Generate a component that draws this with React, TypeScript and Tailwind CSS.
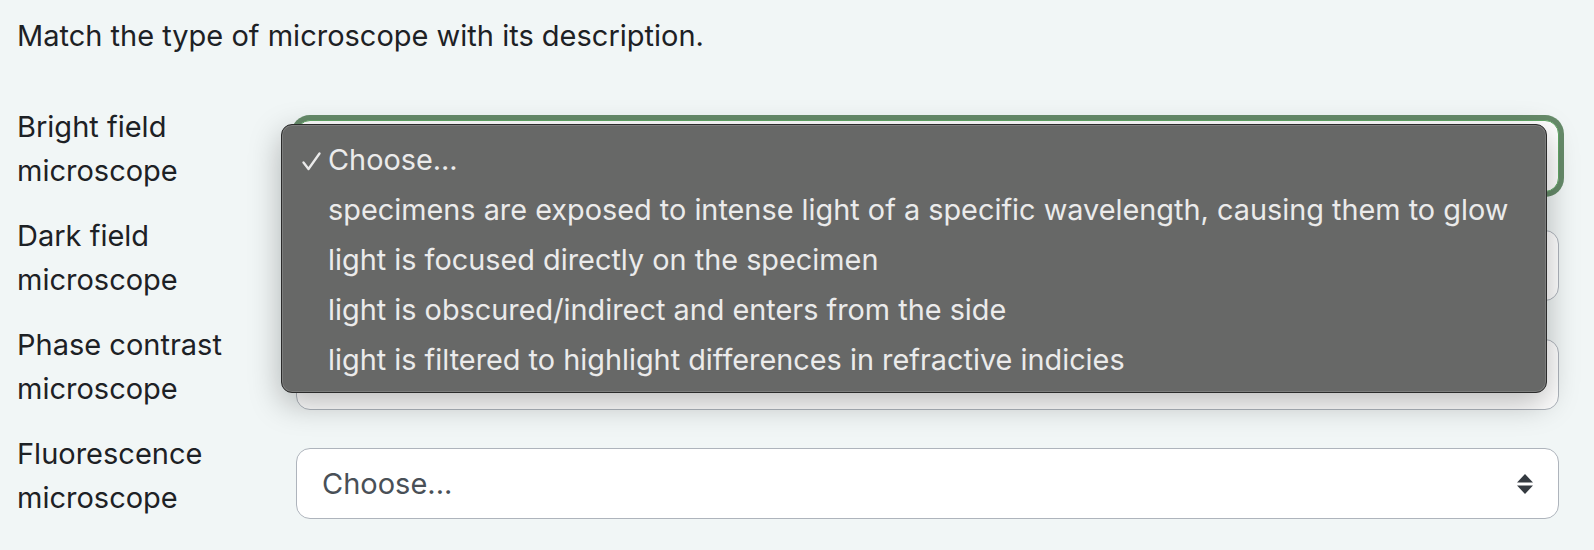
const rows = [
  ["Bright field", "microscope"],
  ["Dark field", "microscope"],
  ["Phase contrast", "microscope"],
  ["Fluorescence", "microscope"],
];

const options = [
  "Choose...",
  "specimens are exposed to intense light of a specific wavelength, causing them to glow",
  "light is focused directly on the specimen",
  "light is obscured/indirect and enters from the side",
  "light is filtered to highlight differences in refractive indicies",
];

function Arrows() {
  return (
    <svg width="16" height="20" viewBox="0 0 16 20" className="absolute right-[25px] top-[25px]">
      <path d="M8 0 L16 8.5 L0 8.5 Z" fill="#343a40" />
      <path d="M0 11.5 L16 11.5 L8 20 Z" fill="#343a40" />
    </svg>
  );
}

function Check() {
  return (
    <svg width="19" height="19" viewBox="0 0 19 19" className="mt-[2px]">
      <path d="M1.5 10.5 L6.5 17 L17.5 1.5" fill="none" stroke="#ebebeb" strokeWidth="2.3" strokeLinecap="round" strokeLinejoin="round" />
    </svg>
  );
}

function Menu() {
  return (
    <div className="absolute left-[-16px] top-[3px] z-10 w-[1266px] rounded-[11px] border border-[#2b2b2b] bg-[#676867] pb-[7px] pt-[10px] text-[28.85px] text-[#ebebeb] shadow-[0_10px_32px_rgba(0,0,0,0.28),inset_0_0_0_1px_rgba(255,255,255,0.14)]">
      {options.map((o, i) => (
        <div key={i} className="flex h-[50px] items-center pl-[20px] leading-[50px]">
          <span className="flex w-[26px] items-center">{i === 0 ? <Check /> : null}</span>
          <span>{o}</span>
        </div>
      ))}
    </div>
  );
}

export default function App() {
  return (
    <div className="min-h-screen bg-[#f1f6f6] pl-[17px] pt-[14px] font-['Inter','Noto_Sans',sans-serif] text-[29px] leading-[44px] text-[#1d2125]">
      <p>Match the type of microscope with its description.</p>

      <div className="mt-[47px] flex w-[1542px] flex-col gap-[21px]">
        {rows.map((r, i) => (
          <div key={i} className="flex">
            <div className="w-[279px] shrink-0">
              <div>{r[0]}</div>
              <div>{r[1]}</div>
            </div>
            <div className="relative mt-[16px] flex-1">
              {i === 0 ? (
                <div className="relative mt-[-1px] h-[72px] rounded-[14px] border border-[#62a766] bg-white shadow-[0_0_0_5px_#668b6a]">
                  <Menu />
                </div>
              ) : (
                <div className="relative flex h-[71px] items-center rounded-[14px] border border-[#aeb4bc] bg-white pl-[25px] text-[#495057]">
                  Choose...
                  <Arrows />
                </div>
              )}
            </div>
          </div>
        ))}
      </div>
    </div>
  );
}
